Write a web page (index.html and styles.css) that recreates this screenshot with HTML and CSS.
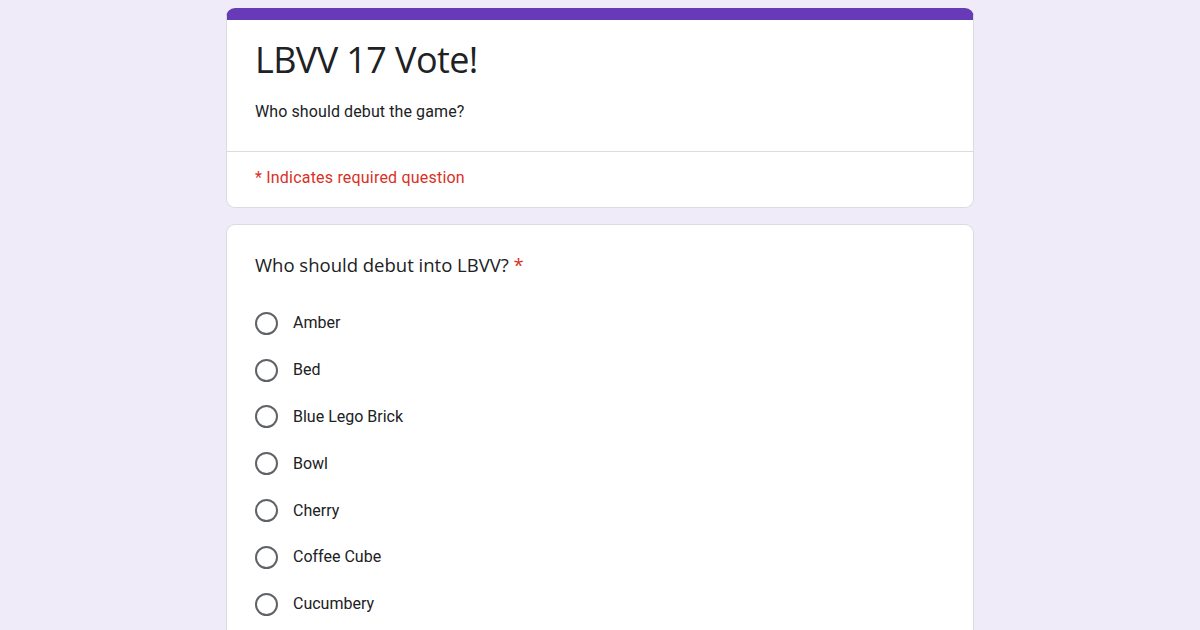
FILE: index.html
```html
<!DOCTYPE html>
<html lang="en">
<head>
<meta charset="utf-8">
<title>LBVV 17 Vote!</title>
<link rel="stylesheet" href="styles.css">
</head>
<body>
<main class="form">
  <section class="card header-card">
    <div class="header-main">
      <h1 class="title">LBVV 17 Vote!</h1>
      <p class="desc">Who should debut the game?</p>
    </div>
    <div class="header-req">* Indicates required question</div>
  </section>
  <section class="card question-card">
    <h2 class="question">Who should debut into LBVV? <span class="star">*</span></h2>
    <div class="options">
      <label class="option"><span class="radio"></span><span class="label">Amber</span></label>
      <label class="option"><span class="radio"></span><span class="label">Bed</span></label>
      <label class="option"><span class="radio"></span><span class="label">Blue Lego Brick</span></label>
      <label class="option"><span class="radio"></span><span class="label">Bowl</span></label>
      <label class="option"><span class="radio"></span><span class="label">Cherry</span></label>
      <label class="option"><span class="radio"></span><span class="label">Coffee Cube</span></label>
      <label class="option"><span class="radio"></span><span class="label">Cucumbery</span></label>
    </div>
  </section>
</main>
</body>
</html>
```
FILE: styles.css
```css
html, body {
  margin: 0;
  padding: 0;
  background: #f0ebf8;
  height: 630px;
  overflow: hidden;
}
body {
  font-family: Roboto, "Liberation Sans", sans-serif;
  color: #202124;
}
.form {
  width: 748px;
  margin: 8px auto 0;
  display: flex;
  flex-direction: column;
  gap: 16px;
}
.card {
  background: #fff;
  border: 1px solid #dadce0;
  border-radius: 9px;
  box-sizing: border-box;
}
.header-card {
  border-top: 12px solid #673ab7;
}
.header-main {
  padding: 16px 29px 27px 28px;
  border-bottom: 1px solid #dadce0;
}
.title {
  margin: 0;
  font-family: "Open Sans", Roboto, sans-serif;
  font-weight: 400;
  font-size: 36px;
  line-height: 48px;
  letter-spacing: -0.6px;
  color: #202124;
}
.desc {
  margin: 16px 0 0;
  font-size: 16px;
  line-height: 24px;
  letter-spacing: 0.1px;
}
.header-req {
  padding: 14px 29px 17px 28px;
  font-size: 16px;
  line-height: 24px;
  color: #d93025;
  letter-spacing: 0.2px;
}
.question-card {
  padding: 26px 29px 0 28px;
  height: 420px;
}
.question {
  margin: 0;
  font-family: "Open Sans", Roboto, sans-serif;
  font-weight: 400;
  font-size: 18.5px;
  line-height: 28px;
  letter-spacing: 0;
}
.star {
  color: #d93025;
}
.options {
  margin-top: 21px;
  display: flex;
  flex-direction: column;
}
.option {
  display: flex;
  align-items: center;
  height: 46.8px;
  gap: 15px;
}
.radio {
  width: 23px;
  height: 23px;
  border: 2px solid #5f6368;
  border-radius: 50%;
  box-sizing: border-box;
  flex: none;
}
.label {
  font-size: 16px;
  line-height: 24px;
}
```
